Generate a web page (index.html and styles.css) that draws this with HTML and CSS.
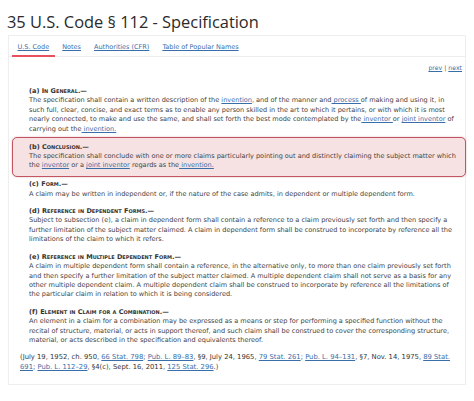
FILE: index.html
```html
<!DOCTYPE html>
<html>
<head>
<meta charset="utf-8">
<link rel="stylesheet" href="styles.css">
</head>
<body>
<h1 class="title">35 U.S. Code § 112 - Specification</h1>
<div class="panel">
  <nav class="tabs">
    <a class="tab active" href="#">U.S. Code</a>
    <a class="tab" href="#">Notes</a>
    <a class="tab" href="#">Authorities (CFR)</a>
    <a class="tab" href="#">Table of Popular Names</a>
  </nav>
  <div class="pager"><a href="#">prev</a> | <a href="#">next</a></div>
  <div class="content">
    <div class="sub">
      <div class="head">(a) <span class="sc">In General.—</span></div>
      <p>The specification shall contain a written description of the <a href="#">invention</a>, and of the manner and<a href="#"> process </a>of making and using it, in such full, clear, concise, and exact terms as to enable any person skilled in the art to which it pertains, or with which it is most nearly connected, to make and use the same, and shall set forth the best mode contemplated by the<a href="#"> inventor </a>or <a href="#">joint inventor</a> of carrying out the<a href="#"> invention.</a></p>
    </div>
    <div class="sub hl">
      <div class="head">(b) <span class="sc">Conclusion.—</span></div>
      <p>The specification shall conclude with one or more claims particularly pointing out and distinctly claiming the subject matter which the <a href="#">inventor</a> or a <a href="#">joint inventor</a> regards as the<a href="#"> invention.</a></p>
    </div>
    <div class="sub">
      <div class="head">(c) <span class="sc">Form.—</span></div>
      <p>A claim may be written in independent or, if the nature of the case admits, in dependent or multiple dependent form.</p>
    </div>
    <div class="sub">
      <div class="head">(d) <span class="sc">Reference in Dependent Forms.—</span></div>
      <p>Subject to subsection (e), a claim in dependent form shall contain a reference to a claim previously set forth and then specify a further limitation of the subject matter claimed. A claim in dependent form shall be construed to incorporate by reference all the limitations of the claim to which it refers.</p>
    </div>
    <div class="sub">
      <div class="head">(e) <span class="sc">Reference in Multiple Dependent Form.—</span></div>
      <p>A claim in multiple dependent form shall contain a reference, in the alternative only, to more than one claim previously set forth and then specify a further limitation of the subject matter claimed. A multiple dependent claim shall not serve as a basis for any other multiple dependent claim. A multiple dependent claim shall be construed to incorporate by reference all the limitations of the particular claim in relation to which it is being considered.</p>
    </div>
    <div class="sub">
      <div class="head">(f) <span class="sc">Element in Claim for a Combination.—</span></div>
      <p>An element in a claim for a combination may be expressed as a means or step for performing a specified function without the recital of structure, material, or acts in support thereof, and such claim shall be construed to cover the corresponding structure, material, or acts described in the specification and equivalents thereof.</p>
    </div>
  </div>
  <p class="notes">(July 19, 1952, ch. 950, <a href="#">66 Stat. 798</a>; <a href="#">Pub. L. 89–83</a>, §9, July 24, 1965, <a href="#">79 Stat. 261</a>; <a href="#">Pub. L. 94–131</a>, §7, Nov. 14, 1975, <a href="#">89 Stat. 691</a>; <a href="#">Pub. L. 112–29</a>, §4(c), Sept. 16, 2011, <a href="#">125 Stat. 296</a>.)</p>
</div>
</body>
</html>
```

FILE: styles.css
```css
body {
  margin: 0;
  background: #fff;
  font-family: "DejaVu Sans", Verdana, sans-serif;
  color: #444;
}
a { color: #3a6ea8; text-decoration: underline; }

.title {
  margin: 0;
  padding: 12px 0 0 7px;
  height: 23px;
  font-family: "Open Sans", "Liberation Sans", sans-serif;
  font-weight: normal;
  font-size: 16.4px;
  line-height: 20px;
  color: #2a2a2a;
}

.panel {
  margin-left: 8px;
  width: 456px;
  height: 348px;
  border: 1px solid #eeeeee;
  box-shadow: 0 1px 1px rgba(0,0,0,0.04);
}

.tabs {
  display: flex;
  padding-left: 3px;
  border-bottom: 1px solid #ededed;
}
.tab {
  display: block;
  padding: 7px 5.5px 4px;
  margin-right: 2px;
  font-size: 6.5px;
  line-height: 8px;
  border-bottom: 2px solid transparent;
  margin-bottom: -1px;
}
.tab.active { border-bottom-color: #e8505f; }

.pager {
  text-align: right;
  padding: 7px 3px 0 0;
  font-size: 6.2px;
  line-height: 8px;
  color: #555;
}

.content {
  margin-top: 15px;
}

.sub {
  margin: 0 10px 8px 20px;
  font-size: 6.55px;
  line-height: 9.4px;
}
.sub p { margin: 0; }
.head {
  font-weight: bold;
  color: #333;
}
.sc { font-variant: small-caps; }

.hl {
  margin: -5.5px -1px 3.5px 3px;
  padding: 5px 5px 5px 16px;
  background: #f6e2e2;
  border: 1.5px solid #c25561;
  border-radius: 5px;
  box-shadow: 0 0 2px rgba(150,40,50,0.35);
}

.notes {
  margin: 6px 8px 0 11px;
  font-size: 6.8px;
  line-height: 9.4px;
  color: #333;
}
```
